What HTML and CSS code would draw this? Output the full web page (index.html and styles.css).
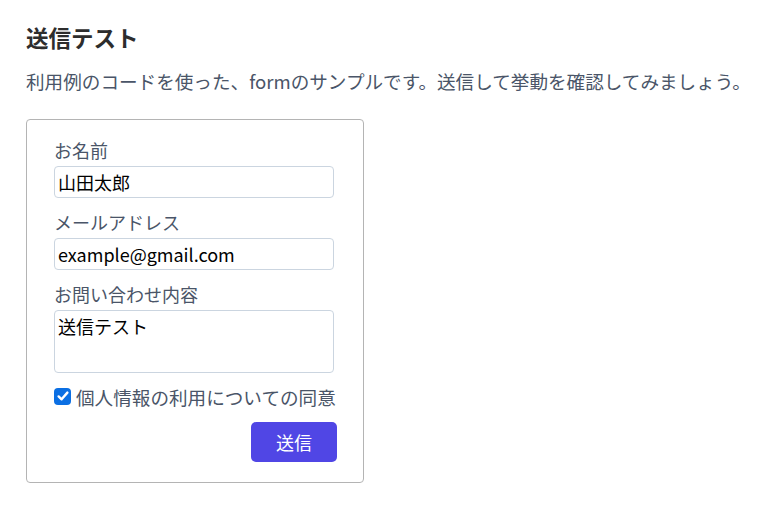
FILE: index.html
```html
<!DOCTYPE html>
<html lang="ja">
<head>
<meta charset="utf-8">
<title>送信テスト</title>
<link rel="stylesheet" href="styles.css">
</head>
<body>
<h1 class="title">送信テスト</h1>
<p class="lead">利用例のコードを使った、formのサンプルです。送信して挙動を確認してみましょう。</p>
<form class="card">
  <label class="label" for="name">お名前</label>
  <input class="field" id="name" type="text" value="山田太郎">
  <label class="label" for="email">メールアドレス</label>
  <input class="field" id="email" type="email" value="example@gmail.com">
  <label class="label" for="msg">お問い合わせ内容</label>
  <textarea class="field area" id="msg">送信テスト</textarea>
  <label class="agree"><span class="box"><input class="check" type="checkbox" checked><svg class="tick" viewBox="0 0 16 16" width="16" height="16" aria-hidden="true"><path d="M3.6 8.4 L6.6 11.3 L12.4 4.6" fill="none" stroke="#fff" stroke-width="2.4" stroke-linecap="round" stroke-linejoin="round"/></svg></span><span>個人情報の利用についての同意</span></label>
  <div class="actions"><button class="submit" type="button">送信</button></div>
</form>
</body>
</html>
```
FILE: styles.css
```css
* { box-sizing: border-box; }
body {
  margin: 0;
  padding: 0 26px;
  background: #fff;
  font-family: "Noto Sans CJK JP", "Noto Sans", sans-serif;
  color: #4a5568;
}
.title {
  margin: 21px 0 0;
  font-size: 22.5px;
  line-height: 32px;
  font-weight: 700;
  color: #2d2d2d;
}
.lead {
  margin: 14px 0 24px;
  font-size: 18.6px;
  line-height: 28px;
  color: #4a5568;
  white-space: nowrap;
}
.card {
  display: flex;
  flex-direction: column;
  width: 338px;
  border: 1px solid #b4b4b4;
  border-radius: 4px;
  padding: 18px 26px 20px 27px;
}
.label {
  display: block;
  font-size: 18px;
  line-height: 24px;
  margin-top: 12px;
  color: #4a5568;
}
.label:first-child { margin-top: 0; }
.field {
  display: block;
  width: 280px;
  height: 32px;
  margin: 4px 0 0;
  padding: 0 3px;
  border: 1px solid #cbd5e0;
  border-radius: 4px;
  font-family: "Noto Sans CJK JP", "Noto Sans", sans-serif;
  font-size: 18px;
  color: #000;
  background: #fff;
  outline: none;
}
.area {
  height: 63px;
  padding: 2px 3px;
  resize: none;
  line-height: 26px;
}
.agree {
  display: flex;
  align-items: center;
  gap: 5px;
  margin-top: 11px;
  height: 24px;
  font-size: 18.6px;
  color: #4a5568;
  white-space: nowrap;
}
.box {
  position: relative;
  display: block;
  width: 17px;
  height: 17px;
}
.check {
  appearance: none;
  -webkit-appearance: none;
  display: block;
  width: 17px;
  height: 17px;
  margin: 0;
  border-radius: 4px;
  background: #0b6fe3;
}
.tick {
  position: absolute;
  left: 0.5px;
  top: 0.5px;
  pointer-events: none;
}
.actions {
  display: flex;
  justify-content: flex-end;
  margin-top: 14px;
}
.submit {
  width: 86px;
  height: 40px;
  border: none;
  border-radius: 5px;
  background: #5046e5;
  color: #fff;
  font-family: "Noto Sans CJK JP", "Noto Sans", sans-serif;
  font-size: 18px;
}
```
